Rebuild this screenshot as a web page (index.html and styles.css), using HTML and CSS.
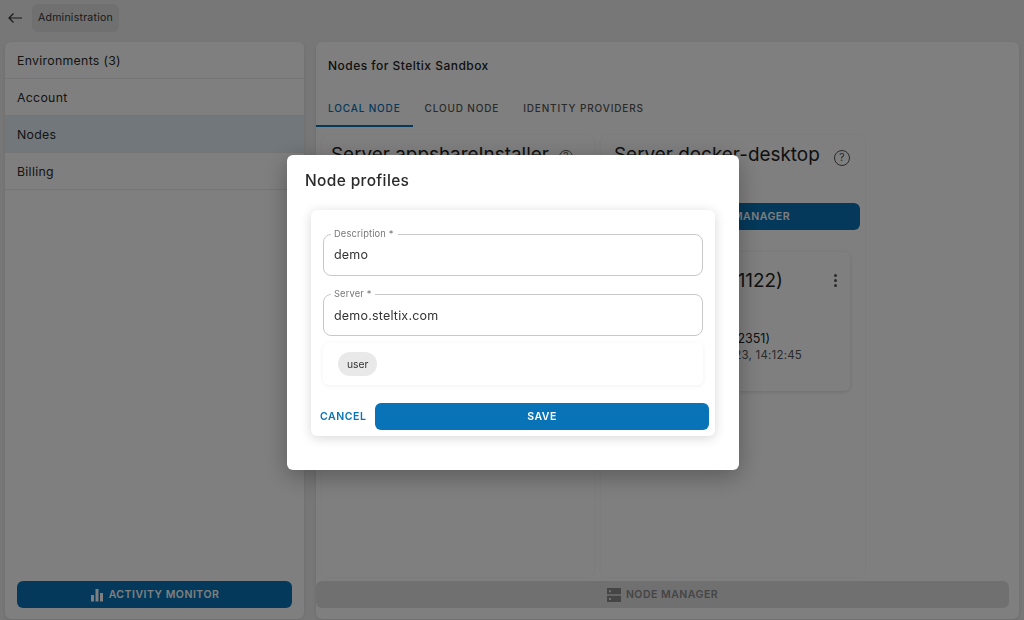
FILE: index.html
```html
<!DOCTYPE html>
<html lang="en">
<head>
<meta charset="utf-8">
<title>Node profiles</title>
<link rel="stylesheet" href="styles.css">
</head>
<body>
<div class="page">
  <header class="topbar">
    <svg class="back" viewBox="0 0 16 12" width="16" height="12"><path d="M15 6H2M6.500 1.500 2 6l4.500 4.500" fill="none" stroke="currentColor" stroke-width="1.200"/></svg>
    <span class="crumb">Administration</span>
  </header>
  <main class="main">
    <aside class="side">
      <nav class="menu">
        <a class="item">Environments (3)</a>
        <a class="item">Account</a>
        <a class="item active">Nodes</a>
        <a class="item">Billing</a>
      </nav>
      <button class="btn primary monitor">
        <svg viewBox="0 0 14 14" width="14" height="14"><path d="M1 7h3v6.500H1zM5.500 1h3v12.500h-3zM10 5h3v8.500h-3z" fill="currentColor"/></svg>
        ACTIVITY MONITOR
      </button>
    </aside>
    <section class="panel">
      <h1 class="panel-title">Nodes for Steltix Sandbox</h1>
      <div class="tabs">
        <span class="tab selected">LOCAL NODE</span>
        <span class="tab">CLOUD NODE</span>
        <span class="tab">IDENTITY PROVIDERS</span>
      </div>
      <div class="cols">
        <div class="col col-a">
          <h2 class="server">Server appshareInstaller <span class="help small">?</span></h2>
        </div>
        <div class="col col-b">
          <h2 class="server">Server docker-desktop <span class="help">?</span></h2>
          <button class="btn primary manager">MANAGER</button>
          <div class="node">
            <div class="node-head">
              <span class="node-name">Node (1122)</span>
              <span class="dots"><i></i><i></i><i></i></span>
            </div>
            <div class="node-sub">Version (2351)</div>
            <div class="node-date">01/01/2023, 14:12:45</div>
          </div>
        </div>
      </div>
      <button class="btn disabled nodeman">
        <svg viewBox="0 0 14 14" width="14" height="14"><path fill-rule="evenodd" d="M0 0h14v6.300H0zM0 7.700h14V14H0zM2 2.300v2h2v-2zM2 10v2h2v-2z" fill="currentColor"/></svg>
        NODE MANAGER
      </button>
    </section>
  </main>
</div>
<div class="overlay">
  <div class="dialog">
    <h2 class="dialog-title">Node profiles</h2>
    <form class="form">
      <fieldset class="field">
        <legend>Description *</legend>
        <span class="value">demo</span>
      </fieldset>
      <fieldset class="field">
        <legend>Server *</legend>
        <span class="value">demo.steltix.com</span>
      </fieldset>
      <div class="chips"><span class="chip">user</span></div>
      <div class="actions">
        <button type="button" class="cancel">CANCEL</button>
        <button type="button" class="btn primary save">SAVE</button>
      </div>
    </form>
  </div>
</div>
</body>
</html>
```
FILE: styles.css
```css
* { box-sizing: border-box; }
html, body { margin: 0; height: 100%; overflow: hidden; }
body { font-family: Inter, "Liberation Sans", sans-serif; color: #1f1f1f; background: #eeeeee; }
.page { height: 620px; display: flex; flex-direction: column; }
.topbar { height: 42px; flex: none; display: flex; align-items: center; padding: 0 0 6px 7px; gap: 9px; }
.back { color: #333; }
.crumb { font-size: 10.500px; height: 28px; line-height: 28px; padding: 0 6px; border-radius: 6px; background: #e0e0e0; color: #333; letter-spacing: .25px; }
.main { flex: 1; display: flex; gap: 12px; padding: 0 5px 1px 5px; min-height: 0; }
.side { width: 299px; flex: none; background: #fff; border-radius: 6px; display: flex; flex-direction: column; justify-content: space-between; padding-bottom: 11px; box-shadow: 0 1px 3px rgba(0,0,0,.1); }
.menu { display: flex; flex-direction: column; }
.item { height: 37px; line-height: 37px; padding: 0 12px; font-size: 12.300px; letter-spacing: .3px; border-bottom: 1px solid #eaeaea; color: #2a2a2a; }
.active { background: #e3eff6; }
.btn { border: 0; border-radius: 6px; font-family: inherit; font-weight: 600; font-size: 10.500px; letter-spacing: .5px; display: flex; align-items: center; justify-content: center; gap: 5px; height: 27px; }
.primary { background: #0873b6; color: #fff; }
.monitor { margin: 0 12px; }
.panel { flex: 1; background: #fff; border-radius: 6px; display: flex; flex-direction: column; box-shadow: 0 1px 3px rgba(0,0,0,.1); padding-bottom: 11px; min-width: 0; }
.panel-title { margin: 0; padding: 16px 12px 0; font-size: 12px; font-weight: 500; line-height: 16px; height: 48px; letter-spacing: .47px; color: #222; }
.tabs { display: flex; height: 37px; flex: none; }
.tab { font-size: 10px; font-weight: 500; letter-spacing: .85px; color: #555; line-height: 37px; padding: 0 12px 0 12px; }
.selected { color: #0873b6; border-bottom: 2px solid #0873b6; }
.cols { flex: 1; display: flex; gap: 7px; padding: 8px 0 4px 6px; min-height: 0; }
.col { background: #fff; border-radius: 6px; box-shadow: 0 0 3px rgba(0,0,0,.07); padding: 8px 9px; min-width: 0; }
.col-a { width: 272px; }
.col-b { width: 264px; padding: 8px 7px 0 13px; }
.server { margin: 0; font-size: 18.900px; font-weight: 400; line-height: 24px; white-space: nowrap; color: #222; display: flex; align-items: center; }
.help { margin-left: 14px; width: 16px; height: 16px; border: 1.500px solid #555; border-radius: 50%; font-size: 11px; line-height: 13px; text-align: center; color: #555; margin-top: 5px; flex: none; }
.help.small { width: 14px; height: 14px; font-size: 10px; line-height: 11px; margin-left: 10px; margin-top: 3px; }
.manager { width: 241px; margin: 36px 0 0 5px; justify-content: flex-end; padding-right: 70px; height: 27px; }
.node { width: 240px; height: 139px; margin: 22px 0 0 -4px; border-radius: 6px; background: #fff; box-shadow: 0 1px 4px rgba(0,0,0,.14); padding: 16px 0 0 0; }
.node-head { display: flex; justify-content: flex-end; align-items: center; height: 24px; padding-right: 13px; }
.node-name { font-size: 18.900px; white-space: nowrap; margin-right: 51px; color: #222; }
.dots { display: flex; flex-direction: column; gap: 2px; }
.dots i { display: block; width: 3px; height: 3px; border-radius: 50%; background: #555; }
.node-sub { text-align: right; font-size: 12.500px; line-height: 17px; margin-top: 38px; padding-right: 80px; color: #222; }
.node-date { text-align: right; font-size: 11.500px; line-height: 17px; padding-right: 48px; color: #555; letter-spacing: .2px; }
.nodeman { margin: 0 10px 0 0; background: #e0e0e0; color: #8a8a8a; flex: none; }
.overlay { position: fixed; inset: 0; background: rgba(0,0,0,.5); display: flex; align-items: flex-start; justify-content: center; padding-top: 155px; }
.dialog { width: 452px; height: 315px; margin-left: 2px; background: #fff; border-radius: 6px; padding: 0 24px; box-shadow: 0 6px 24px rgba(0,0,0,.3); display: flex; flex-direction: column; }
.dialog-title { margin: 0 0 0 -6px; padding-top: 16px; height: 55px; font-size: 15.500px; font-weight: 500; letter-spacing: .35px; line-height: 20px; color: #2a2a2a; }
.form { width: 404px; height: 226px; background: #fff; border-radius: 6px; box-shadow: 0 2px 12px rgba(0,0,0,.16); padding: 18px 12px 0; display: flex; flex-direction: column; }
.field { margin: 0 0 12px; padding: 0 7px; height: 48px; border: 1px solid #c8c8c8; border-radius: 8px; display: block; flex: none; }
.field legend { font-size: 9.300px; padding: 0 4px 0 3px; color: #777; line-height: 12px; letter-spacing: .15px; }
.field + .field { margin-bottom: 6px; }
.value { display: block; font-size: 12.500px; letter-spacing: .2px; line-height: 16px; margin: 7px 0 0 3px; color: #333; }
.field + .field .value { margin-top: 8px; }
.chips { height: 42px; flex: none; border-radius: 6px; box-shadow: 0 1px 5px rgba(0,0,0,.06); display: flex; align-items: center; padding-left: 15px; margin-top: 1px; }
.chip { height: 24px; line-height: 24px; padding: 0 9px; border-radius: 12px; background: #e9e9e9; font-size: 10.300px; color: #333; }
.actions { display: flex; align-items: center; margin: 18px -6px 0 -3px; gap: 9px; }
.cancel { border: 0; padding: 0; background: none; font-family: inherit; font-weight: 600; font-size: 10.500px; letter-spacing: .55px; color: #0873b6; white-space: nowrap; width: 46px; }
.save { flex: 1; height: 27px; }
```
